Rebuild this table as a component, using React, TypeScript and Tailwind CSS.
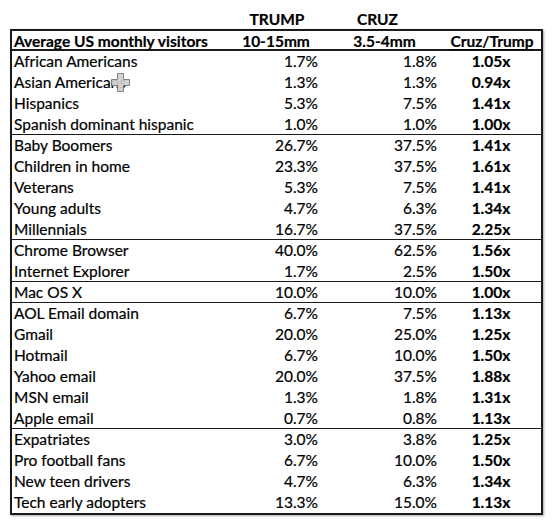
import React from "react";

type Row = [string, string, string, string];

const groups: Row[][] = [
  [
    ["African Americans", "1.7%", "1.8%", "1.05x"],
    ["Asian Americans", "1.3%", "1.3%", "0.94x"],
    ["Hispanics", "5.3%", "7.5%", "1.41x"],
    ["Spanish dominant hispanic", "1.0%", "1.0%", "1.00x"],
  ],
  [
    ["Baby Boomers", "26.7%", "37.5%", "1.41x"],
    ["Children in home", "23.3%", "37.5%", "1.61x"],
    ["Veterans", "5.3%", "7.5%", "1.41x"],
    ["Young adults", "4.7%", "6.3%", "1.34x"],
    ["Millennials", "16.7%", "37.5%", "2.25x"],
  ],
  [
    ["Chrome Browser", "40.0%", "62.5%", "1.56x"],
    ["Internet Explorer", "1.7%", "2.5%", "1.50x"],
  ],
  [["Mac OS X", "10.0%", "10.0%", "1.00x"]],
  [
    ["AOL Email domain", "6.7%", "7.5%", "1.13x"],
    ["Gmail", "20.0%", "25.0%", "1.25x"],
    ["Hotmail", "6.7%", "10.0%", "1.50x"],
    ["Yahoo email", "20.0%", "37.5%", "1.88x"],
    ["MSN email", "1.3%", "1.8%", "1.31x"],
    ["Apple email", "0.7%", "0.8%", "1.13x"],
  ],
  [
    ["Expatriates", "3.0%", "3.8%", "1.25x"],
    ["Pro football fans", "6.7%", "10.0%", "1.50x"],
    ["New teen drivers", "4.7%", "6.3%", "1.34x"],
    ["Tech early adopters", "13.3%", "15.0%", "1.13x"],
  ],
];

const cols = "grid grid-cols-[220px_86px_119px_1fr]";

// the grey Excel cell cursor sitting over "Asian Americans"
function CellCursor() {
  return (
    <svg
      className="absolute left-[110px] top-[72px]"
      width="21"
      height="21"
      viewBox="0 0 21 21"
    >
      <path
        d="M7.5 1.5h6v6h6v6h-6v6h-6v-6h-6v-6h6z"
        fill="#cfcfcf"
        stroke="#777"
        strokeWidth="1"
        opacity="0.92"
      />
    </svg>
  );
}

export default function App() {
  return (
    <div className="relative w-[560px] h-[526px] bg-white text-black font-['Lato','Liberation_Sans',sans-serif] text-[15.5px] [-webkit-text-stroke:0.2px_black]">
      <div className="pl-[10px] pt-[10px]">
        {/* column titles above the box */}
        <div className={`${cols} pl-[2px] w-[533px] h-[19px] font-bold leading-[19px]`}>
          <div />
          <div className="text-center pl-[4px]">TRUMP</div>
          <div className="text-center">CRUZ</div>
          <div />
        </div>

        <div className="w-[533px] border-2 border-[#1a1a1a] shadow-[1px_1px_2px_rgba(0,0,0,0.35)]">
          <div className={`${cols} h-[20px] leading-[20px] font-bold border-b-2 border-[#1a1a1a]`}>
            <div className="pl-[2px]">Average US monthly visitors</div>
            <div className="text-center pl-[2px]">10-15mm</div>
            <div className="text-center pl-[14px]">3.5-4mm</div>
            <div className="text-center pl-[6px] underline underline-offset-2">Cruz/Trump</div>
          </div>

          {groups.map((group, gi) => {
            const last = gi === groups.length - 1;
            return (
              <div key={gi} className={last ? "" : "border-b border-[#1a1a1a]"}>
                {group.map((r, ri) => (
                  <div
                    key={r[0]}
                    className={`${cols} ${
                      !last && ri === group.length - 1 ? "h-[20px]" : "h-[21px]"
                    } leading-[21px]`}
                  >
                    <div className="pl-[2px]">{r[0]}</div>
                    <div className="text-right">{r[1]}</div>
                    <div className="text-right">{r[2]}</div>
                    <div className="text-center font-bold pl-[4px]">{r[3]}</div>
                  </div>
                ))}
              </div>
            );
          })}
        </div>
      </div>
      <CellCursor />
    </div>
  );
}
